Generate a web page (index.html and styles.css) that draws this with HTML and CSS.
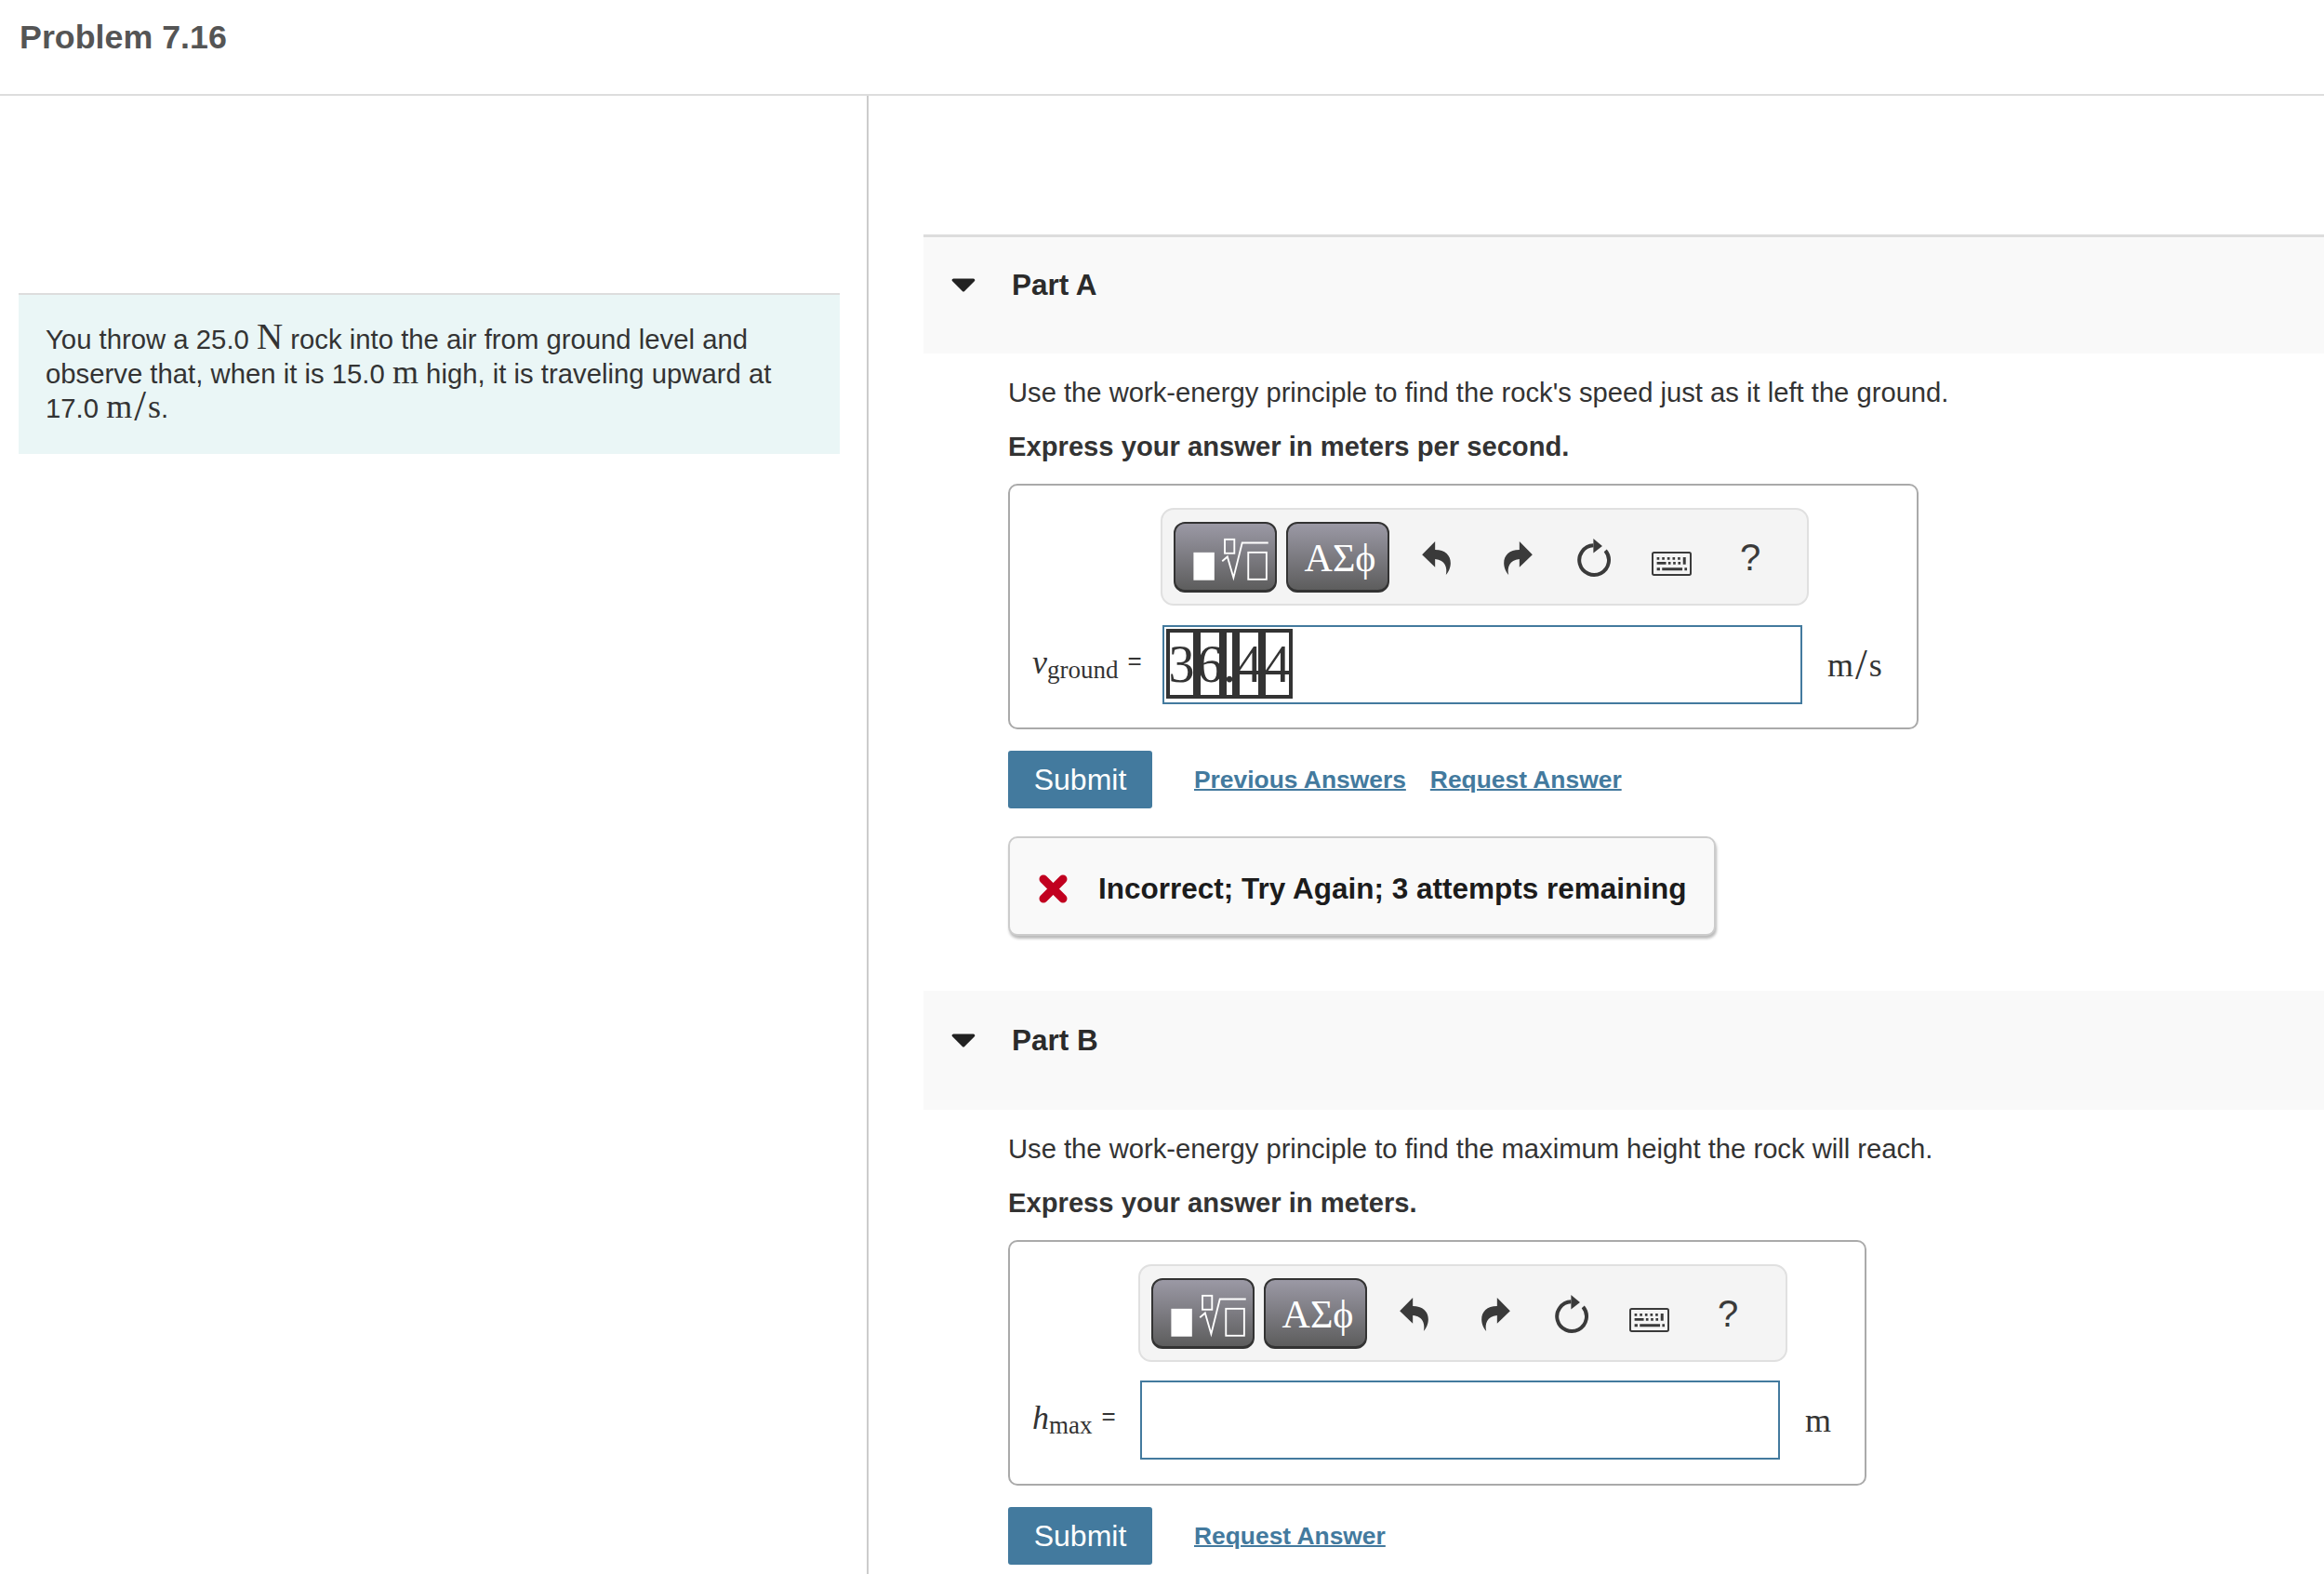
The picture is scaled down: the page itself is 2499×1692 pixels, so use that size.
FILE: index.html
```html
<!DOCTYPE html>
<html lang="en">
<head>
<meta charset="utf-8">
<title>Problem 7.16</title>
<link rel="stylesheet" href="styles.css">
</head>
<body>
<header class="page-header"><h1 class="page-title">Problem 7.16</h1></header>
<main class="layout">
  <aside class="intro-col">
    <div class="intro">You throw a 25.0 <span class="math math-big">N</span> rock into the air from ground level and observe that, when it is 15.0 <span class="math">m</span> high, it is traveling upward at 17.0 <span class="math">m<span class="slash">/</span>s</span>.</div>
  </aside>
  <section class="parts">
    <article class="part part-a">
      <div class="part-head">
        <svg class="caret" viewBox="0 0 24 14"><path d="M2 2H22L12 12Z"/></svg>
        <h2 class="part-name">Part A</h2>
      </div>
      <div class="part-body">
        <p class="prompt">Use the work-energy principle to find the rock's speed just as it left the ground.</p>
        <p class="prompt prompt-strong">Express your answer in meters per second.</p>
        <div class="answer-box answer-a">
          <div class="toolbar">
            <button class="tool-btn" type="button"><svg class="tpl-icon" viewBox="0 0 111 76"><rect x="19" y="33" width="24" height="32" fill="#fff"/><rect x="55" y="18" width="11" height="16" fill="none" stroke="#fff" stroke-width="2"/><path d="M52 43L58 38L65 62L75 22H105" fill="none" stroke="#fff" stroke-width="2"/><rect x="82" y="33" width="21" height="31" fill="none" stroke="#fff" stroke-width="2"/></svg></button>
            <button class="tool-btn tool-text" type="button">ΑΣϕ</button>
            <span class="tool-icons">
              <svg class="ico-arrow" viewBox="0 0 92 108"><path d="M0 43L42 0V27C75 27 92 45 92 70C92 85 85 100 77 108C82 85 75 60 42 57V83Z"/></svg>
              <svg class="ico-arrow" viewBox="0 0 92 108"><path d="M92 43L50 0V27C17 27 0 45 0 70C0 85 7 100 15 108C10 85 17 60 50 57V83Z"/></svg>
              <svg class="ico-reset" viewBox="0 0 120 130"><path d="M94 42A48 48 0 1 1 55 25" fill="none" stroke="#3a3a3a" stroke-width="12"/><path d="M55 3L84 27L55 50Z"/></svg>
              <svg class="ico-keys" viewBox="0 0 130 78"><rect x="3" y="3" width="124" height="72" rx="5" fill="none" stroke="#3a3a3a" stroke-width="6"/><path d="M17 18h8v8h-8zM34 18h8v8h-8zM51 18h8v8h-8zM68 18h8v8h-8zM85 18h8v8h-8zM102 18h9v8h-9zM17 33h30v8h-30zM54 33h8v8h-8zM70 33h8v8h-8zM86 33h8v8h-8zM102 26h9v15h-9zM17 52h10v9h-10zM34 52h66v9h-66zM107 52h8v9h-8z"/></svg>
              <span class="ico-help">?</span>
            </span>
          </div>
          <div class="math-row">
            <span class="var"><i>v</i><sub>ground</sub><span class="eq">=</span></span>
            <div class="math-input"><span class="chars"><span class="ch ch-3">3</span><span class="ch ch-6">6</span><span class="ch ch-dot">.</span><span class="ch ch-6">4</span><span class="ch ch-3">4</span></span></div>
            <span class="unit">m<span class="slash">/</span>s</span>
          </div>
        </div>
        <div class="actions">
          <button class="submit" type="button">Submit</button>
          <span class="links"><a class="link" href="#">Previous Answers</a><a class="link" href="#">Request Answer</a></span>
        </div>
        <div class="feedback">
          <svg class="cross" viewBox="0 0 31 31"><path d="M5 5L26 26M26 5L5 26" stroke="#c1001f" stroke-width="9" stroke-linecap="round"/></svg>
          <span class="feedback-text">Incorrect; Try Again; 3 attempts remaining</span>
        </div>
      </div>
    </article>
    <article class="part part-b">
      <div class="part-head">
        <svg class="caret" viewBox="0 0 24 14"><path d="M2 2H22L12 12Z"/></svg>
        <h2 class="part-name">Part B</h2>
      </div>
      <div class="part-body">
        <p class="prompt">Use the work-energy principle to find the maximum height the rock will reach.</p>
        <p class="prompt prompt-strong">Express your answer in meters.</p>
        <div class="answer-box answer-b">
          <div class="toolbar">
            <button class="tool-btn" type="button"><svg class="tpl-icon" viewBox="0 0 111 76"><rect x="19" y="33" width="24" height="32" fill="#fff"/><rect x="55" y="18" width="11" height="16" fill="none" stroke="#fff" stroke-width="2"/><path d="M52 43L58 38L65 62L75 22H105" fill="none" stroke="#fff" stroke-width="2"/><rect x="82" y="33" width="21" height="31" fill="none" stroke="#fff" stroke-width="2"/></svg></button>
            <button class="tool-btn tool-text" type="button">ΑΣϕ</button>
            <span class="tool-icons">
              <svg class="ico-arrow" viewBox="0 0 92 108"><path d="M0 43L42 0V27C75 27 92 45 92 70C92 85 85 100 77 108C82 85 75 60 42 57V83Z"/></svg>
              <svg class="ico-arrow" viewBox="0 0 92 108"><path d="M92 43L50 0V27C17 27 0 45 0 70C0 85 7 100 15 108C10 85 17 60 50 57V83Z"/></svg>
              <svg class="ico-reset" viewBox="0 0 120 130"><path d="M94 42A48 48 0 1 1 55 25" fill="none" stroke="#3a3a3a" stroke-width="12"/><path d="M55 3L84 27L55 50Z"/></svg>
              <svg class="ico-keys" viewBox="0 0 130 78"><rect x="3" y="3" width="124" height="72" rx="5" fill="none" stroke="#3a3a3a" stroke-width="6"/><path d="M17 18h8v8h-8zM34 18h8v8h-8zM51 18h8v8h-8zM68 18h8v8h-8zM85 18h8v8h-8zM102 18h9v8h-9zM17 33h30v8h-30zM54 33h8v8h-8zM70 33h8v8h-8zM86 33h8v8h-8zM102 26h9v15h-9zM17 52h10v9h-10zM34 52h66v9h-66zM107 52h8v9h-8z"/></svg>
              <span class="ico-help">?</span>
            </span>
          </div>
          <div class="math-row">
            <span class="var"><i>h</i><sub>max</sub><span class="eq">=</span></span>
            <div class="math-input"></div>
            <span class="unit">m</span>
          </div>
        </div>
        <div class="actions">
          <button class="submit" type="button">Submit</button>
          <span class="links"><a class="link" href="#">Request Answer</a></span>
        </div>
      </div>
    </article>
  </section>
</main>
</body>
</html>
```

FILE: styles.css
```css
* { box-sizing: border-box; }
html, body { height: 100%; }
body {
  margin: 0;
  overflow: hidden;
  background: #fff;
  color: #333;
  font-family: "Liberation Sans", Arial, sans-serif;
  display: flex;
  flex-direction: column;
}
.page-header {
  height: 103px;
  flex: none;
  border-bottom: 2px solid #ddd;
  padding: 19px 20px 0 21px;
}
.page-title {
  margin: 0;
  font-size: 35.8px;
  line-height: 42px;
  font-weight: 700;
  color: #555;
}
.layout {
  flex: 1;
  min-height: 0;
  display: grid;
  grid-template-columns: 934px 1fr;
}
.intro-col {
  border-right: 2px solid #ccc;
  padding: 212px 29px 0 20px;
}
.intro {
  border-top: 2px solid #ddd;
  background: #eaf6f6;
  padding: 29px 30px 30px 29px;
  font-size: 29.3px;
  line-height: 37px;
  height: 173px;
}
.math { font-family: "Liberation Serif", serif; font-size: 36px; line-height: 0; }
.math-big { font-size: 39px; }
.slash { font-size: 46px; line-height: 0; margin: 0 2px; vertical-align: -3px; }
.parts { padding: 149px 0 0 59px; }
.part-head {
  height: 128px;
  background: #f9f9f9;
  display: flex;
  align-items: center;
  padding: 0 0 22px 30px;
}
.part-a .part-head { border-top: 3px solid #ddd; }
.part-a .part-name { margin-bottom: 2px; }
.caret { width: 26px; height: 15px; fill: #222; stroke: #222; stroke-width: 3; stroke-linejoin: round; flex: none; }
.part-name { margin: 0 0 0 39px; font-size: 31.5px; line-height: 38px; font-weight: 700; color: #2b2b2b; }
.part-body { padding: 24px 0 0 91px; }
.prompt { margin: 0 0 21px; font-size: 29.2px; line-height: 37px; color: #333; }
.prompt-strong { font-weight: 700; }
.answer-box {
  border: 2px solid #aaa;
  border-radius: 10px;
  padding: 24px 0 25px 24px;
  margin-top: 21px;
}
.answer-a { width: 979px; }
.answer-b { width: 923px; padding-bottom: 26px; }
.toolbar {
  height: 105px;
  background: #f4f4f4;
  border: 2px solid #e0e0e0;
  border-radius: 14px;
  display: flex;
  align-items: center;
  gap: 10px;
  padding: 0 0 0 12px;
}
.answer-a .toolbar { margin-left: 138px; width: 697px; }
.answer-b .toolbar { margin-left: 114px; width: 698px; }
.tool-btn {
  width: 111px;
  height: 76px;
  padding: 0;
  border: 2px solid #333;
  border-bottom-width: 3px;
  border-radius: 12px;
  background: linear-gradient(#9b99a5, #5d5d5d);
  color: #fff;
  flex: none;
}
.tool-text { font-family: "Liberation Serif", serif; font-size: 42px; padding: 3px 0 0 5px; }
.tpl-icon { display: block; width: 107px; height: 71px; }
.tool-icons {
  display: flex;
  align-items: center;
  margin-left: 25px;
  fill: #3a3a3a;
}
.ico-arrow { width: 31px; height: 36px; margin-right: 57px; margin-top: 3px; }
.ico-reset { width: 40px; height: 43px; margin-right: 41px; margin-left: -10px; margin-top: 2px; }
.ico-keys { width: 43px; height: 26px; margin: 14px 52px 0 0; }
.ico-help { font-size: 40px; line-height: 44px; color: #3a3a3a; }
.math-row {
  display: flex;
  align-items: center;
  margin-top: 21px;
}
.answer-b .math-row { margin-top: 20px; }
.var {
  font-family: "Liberation Serif", serif;
  font-size: 36px;
  color: #333;
  white-space: nowrap;
  margin-bottom: 6px;
}
.var sub { font-size: 27px; vertical-align: -5px; line-height: 0; }
.eq { font-family: "Liberation Sans", sans-serif; font-size: 26px; margin-left: 10px; vertical-align: 5px; }
.answer-a .var { width: 140px; }
.answer-b .var { width: 116px; }
.math-input {
  height: 85px;
  border: 2px solid #437a9e;
  background: #fff;
  padding: 2px;
  flex: none;
}
.answer-a .math-input { width: 688px; }
.answer-b .math-input { width: 688px; }
.chars { display: flex; height: 75px; }
.ch {
  border: 4px solid #333;
  height: 75px;
  display: flex;
  align-items: center;
  justify-content: center;
  font-family: "Liberation Serif", serif;
  font-size: 56px;
  line-height: 1;
  overflow: visible;
  color: #333;
}
.ch-3 { width: 33px; }
.ch-6 { width: 28px; }
.ch-dot { width: 14px; }
.unit { font-family: "Liberation Serif", serif; font-size: 36px; line-height: 44px; margin-left: 27px; color: #333; white-space: nowrap; }
.actions { display: flex; align-items: center; margin-top: 23px; }
.submit {
  width: 155px;
  height: 62px;
  border: 0;
  border-radius: 3px;
  background: #437a9e;
  color: #fff;
  font-family: "Liberation Sans", sans-serif;
  font-size: 32px;
  padding: 0;
}
.links { display: flex; gap: 26px; margin-left: 45px; }
.link { color: #437a9e; font-size: 26.4px; font-weight: 700; text-decoration: underline; text-decoration-thickness: 2px; }
.feedback {
  width: 761px;
  height: 107px;
  margin-top: 30px;
  margin-bottom: 59px;
  border: 2px solid #ccc;
  border-radius: 10px;
  background: #f9f9f9;
  box-shadow: 1px 3px 3px #bbb;
  display: flex;
  align-items: center;
  gap: 33px;
  padding: 6px 0 0 31px;
  font-size: 31.5px;
  font-weight: 700;
  color: #1c1c1c;
}
.cross { width: 31px; height: 31px; flex: none; }
```
